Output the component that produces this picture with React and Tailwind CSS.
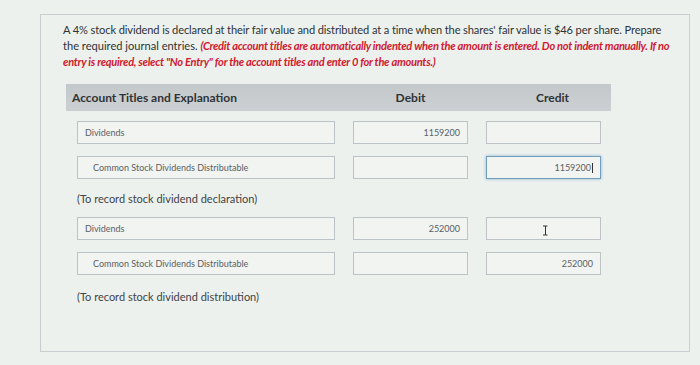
import React from 'react';

const ROWS = [
  { id: 'r1', account: 'Dividends', indent: false, debit: '1159200', credit: '' },
  { id: 'r2', account: 'Common Stock Dividends Distributable', indent: true, debit: '', credit: '1159200', focused: true, gap: 'mt-[12px]' },
  { id: 'n1', note: '(To record stock dividend declaration)', gap: 'mt-[12px]' },
  { id: 'r3', account: 'Dividends', indent: false, debit: '252000', credit: '', cursor: true, gap: 'mt-[10px]' },
  { id: 'r4', account: 'Common Stock Dividends Distributable', indent: true, debit: '', credit: '252000', gap: 'mt-[12px]' },
  { id: 'n2', note: '(To record stock dividend distribution)', gap: 'mt-[14px]' },
];

const Box = ({ children, width, align = 'left', focused, indent }) => (
  <div
    className={`h-[23px] flex items-center text-[9px] text-[#5a6064] bg-[#f3f6f4]/60 border ${
      focused ? 'border-[#6f9dbb] shadow-[0_0_3px_rgba(80,140,190,0.6)]' : 'border-[#bcc3c6]'
    } ${width} ${align === 'right' ? 'justify-end pr-[7px]' : indent ? 'pl-[15px]' : 'pl-[7px]'}`}
  >
    {children}
  </div>
);

const IBeam = () => (
  <svg width="7" height="11" viewBox="0 0 7 11" aria-hidden="true">
    <path d="M1 1h2.5M3.5 1h2M3.5 1v9M1 10h2.5M3.5 10h2" stroke="#333" strokeWidth="1" fill="none" />
  </svg>
);

export default function App() {
  return (
    <div
      className="w-[700px] h-[365px] bg-[#edf1ee] pt-[14px] overflow-hidden"
      style={{ fontFamily: 'Lato, "Open Sans", sans-serif' }}
    >
      <div className="ml-[40px] w-[650px] h-[338px] border border-[#c9cfd0] pt-[7px] pl-[22px]">
        {/* Question text */}
        <p className="whitespace-nowrap text-[11.1px] leading-[16px] text-[#2f3235]">
          <span className="tracking-[-0.12px]">
            A 4% stock dividend is declared at their fair value and distributed at a time when the shares' fair value is $46 per share. Prepare
          </span>
          <br />
          the required journal entries.{' '}
          <span className="text-[#d2192e] font-bold italic tracking-[-0.27px]">
            (Credit account titles are automatically indented when the amount is entered. Do not indent manually. If no
          </span>
          <br />
          <span className="text-[#d2192e] font-bold italic tracking-[-0.27px]">
            entry is required, select "No Entry" for the account titles and enter 0 for the amounts.)
          </span>
        </p>

        {/* Journal table */}
        <div className="mt-[14px] ml-[3px] w-[545px]">
          <div className="h-[27px] flex items-center bg-gradient-to-b from-[#c3c8cb] to-[#ccd0d2] text-[12px] font-bold text-[#2f3336]">
            <div className="w-[269px] pl-[6px]">Account Titles and Explanation</div>
            <div className="w-[151px] text-center">Debit</div>
            <div className="w-[115px] text-center pl-[18px]">Credit</div>
          </div>

          <div className="mt-[10px] flex flex-col">
            {ROWS.map((row) =>
              row.note ? (
                <div key={row.id} className={`${row.gap} pl-[11px] text-[11px] leading-[16px] text-[#3f4346]`}>
                  {row.note}
                </div>
              ) : (
                <div key={row.id} className={`${row.gap || ''} flex items-center pl-[11px] gap-[18px]`}>
                  <Box width="w-[258px]" indent={row.indent}>
                    {row.account}
                  </Box>
                  <Box width="w-[115px]" align="right">
                    {row.debit}
                  </Box>
                  <div className="relative">
                    <Box width="w-[115px]" align="right" focused={row.focused}>
                      {row.credit}
                      {row.focused && <span className="ml-[1px] w-px h-[10px] bg-[#333]" />}
                    </Box>
                    {row.cursor && (
                      <div className="absolute left-[56px] top-[8px]">
                        <IBeam />
                      </div>
                    )}
                  </div>
                </div>
              )
            )}
          </div>
        </div>
      </div>
    </div>
  );
}
